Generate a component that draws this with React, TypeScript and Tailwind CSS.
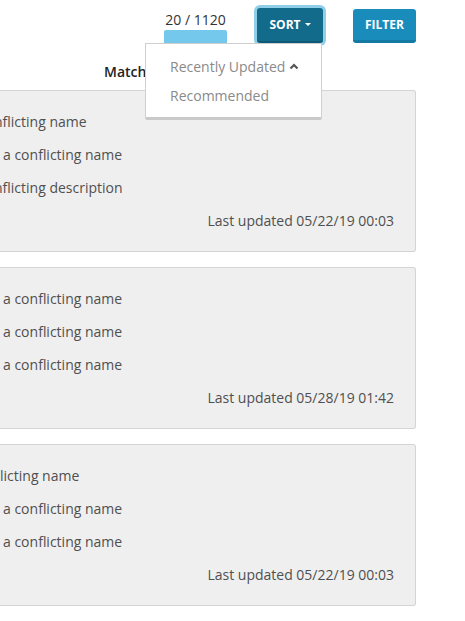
import React from "react";

type Card = { lines: { text: string; indent: string }[]; updated: string };

const cards: Card[] = [
  {
    lines: [
      { text: "nflicting name", indent: "ml-[-6px]" },
      { text: "a conflicting name", indent: "pl-[3px]" },
      { text: "nflicting description", indent: "ml-[-6px]" },
    ],
    updated: "Last updated 05/22/19 00:03",
  },
  {
    lines: [
      { text: "a conflicting name", indent: "pl-[3px]" },
      { text: "a conflicting name", indent: "pl-[3px]" },
      { text: "a conflicting name", indent: "pl-[3px]" },
    ],
    updated: "Last updated 05/28/19 01:42",
  },
  {
    lines: [
      { text: "licting name", indent: "pl-0" },
      { text: "a conflicting name", indent: "pl-[3px]" },
      { text: "a conflicting name", indent: "pl-[3px]" },
    ],
    updated: "Last updated 05/22/19 00:03",
  },
];

const SortMenu = () => (
  <div className="absolute left-[-112px] top-[35px] z-10 w-[177px] bg-white border border-[#cfcfcf] border-b-[3px] border-b-[#c9c9c9] rounded-b-[2px] pt-[13px] pb-[11px] pl-[24px] flex flex-col gap-[9px] text-[14px] leading-5 text-[#8a8a8a] font-normal text-left">
    <div className="flex items-center whitespace-nowrap">
      <span>Recently Updated</span>
      <svg className="ml-[4px] mt-[-1px]" width="10" height="7" viewBox="0 0 10 7">
        <polyline points="1.5,5.5 5,2 8.5,5.5" fill="none" stroke="#555" strokeWidth="2.2" />
      </svg>
    </div>
    <div>Recommended</div>
  </div>
);

export default function App() {
  return (
    <div className="w-[465px] h-[621px] bg-white overflow-hidden font-['Open_Sans','Liberation_Sans',sans-serif]">
      {/* header */}
      <div className="flex items-start h-[62px]">
        <div className="ml-[164px] mt-[10px] w-[63px]">
          <div className="text-[14px] leading-5 text-[#333] text-center">20 / 1120</div>
          <div className="h-[14px] bg-[#74c8ec] rounded-t-[2px]" />
        </div>
        <div className="relative ml-[30px] mt-[8px]">
          <button className="w-[66px] h-[35px] bg-[#126b8b] border-b-2 border-[#0e5a76] rounded-[3px] ring-[3px] ring-[#8fcfe8] text-white text-[12px] font-bold flex items-center justify-center">
            SORT
            <span className="ml-[4px] inline-block w-0 h-0 border-x-[3px] border-x-transparent border-t-[3px] border-t-white" />
          </button>
          <SortMenu />
        </div>
        <button className="ml-[30px] mt-[9px] w-[63px] h-[34px] bg-[#1a8cbc] border-b-[3px] border-[#1479a3] rounded-[3px] text-white text-[12px] font-bold">
          FILTER
        </button>
      </div>

      <div className="pl-[104px] text-[14px] leading-5 font-semibold text-[#222]">Matches</div>

      {/* cards */}
      <div className="mt-[8px] pr-[49px] flex flex-col gap-[15px]">
        {cards.map((c, i) => (
          <div
            key={i}
            className="h-[162px] bg-[#efefef] border border-l-0 border-[#d4d4d4] rounded-r-[3px] pt-[21px] pb-[20px] pr-[21px] flex flex-col gap-[13px] text-[14px] leading-5 text-[#4f4f4f] whitespace-nowrap"
          >
            {c.lines.map((l, j) => (
              <div key={j} className={l.indent}>
                {l.text}
              </div>
            ))}
            <div className="text-right">{c.updated}</div>
          </div>
        ))}
      </div>
    </div>
  );
}
